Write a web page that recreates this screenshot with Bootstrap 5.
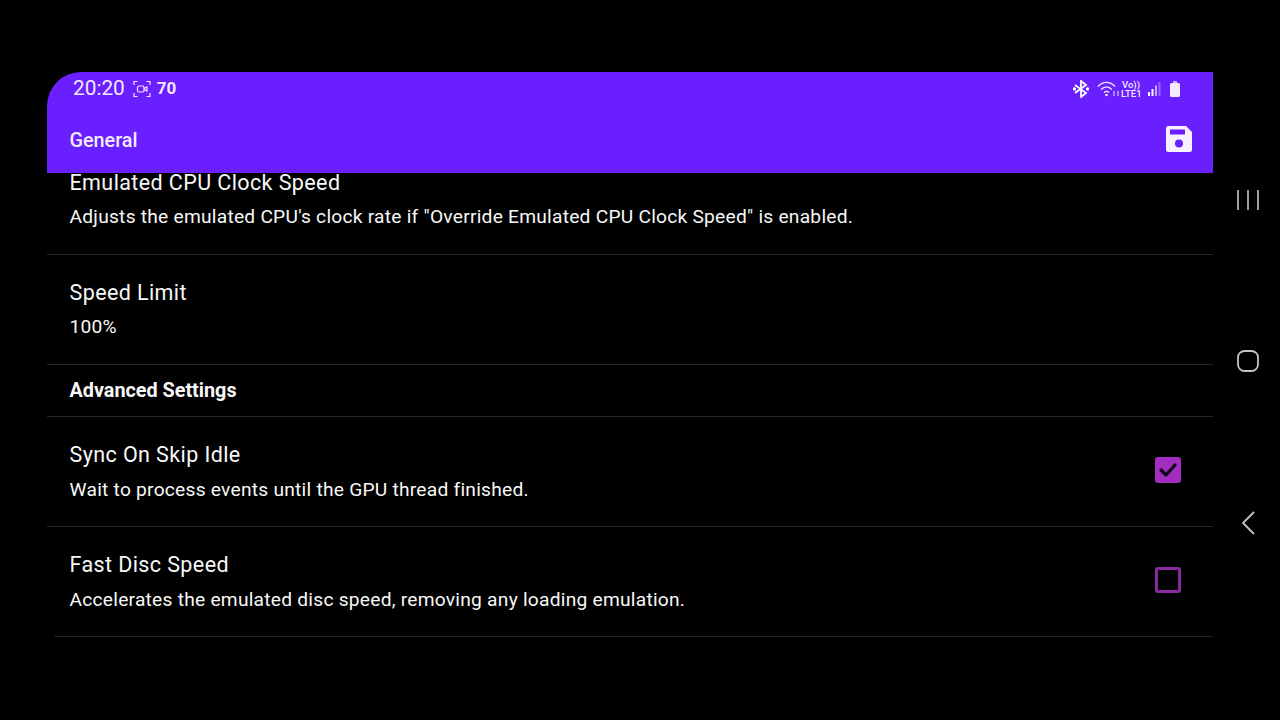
<!DOCTYPE html>
<html lang="en"><head><meta charset="utf-8"><title>General</title>
<link rel="stylesheet" href="https://cdn.jsdelivr.net/npm/bootstrap@5.3.0/dist/css/bootstrap.min.css">
<style>
html,body{height:720px;overflow:hidden;background:#000;}
body{font-family:Roboto,"Liberation Sans",sans-serif;color:#fff;}
.shell{height:720px;padding:72px 0 0 47px;}
.screen{width:1166px;height:648px;}
.appbar{height:101px;background:#6a1fff;border-top-left-radius:34px;}
.statusrow{height:33px;padding:0 32px 0 26px;}
.clock{font-size:20.800px;line-height:33px;color:#f1e8ff;}
.recnum{font-size:17px;font-weight:700;line-height:33px;color:#f1e8ff;margin-left:-2px;}
.toolrow{height:68px;padding:0 21px 0 22.500px;}
.apptitle{font-size:19.800px;font-weight:500;color:#f3ecff;padding-top:4px;}
.entry{height:110px;padding:0 22.500px;border-bottom:1px solid #262626;}
.entry-first{height:82px;}
.entry-last{margin-left:7px;padding-left:15.500px;border-bottom-color:#222;}
.ttl{font-size:21.500px;line-height:26px;color:#f8f8f8;letter-spacing:.4px;}
.desc{font-size:19.200px;line-height:24px;color:#f8f8f8;letter-spacing:.24px;margin-top:9px;}
.twoline{padding-top:1px;}
.twoline .desc{margin-top:10px;}
.first-ttl{margin-top:-3px;}
.secthead{height:52px;padding:0 22.500px;border-bottom:1px solid #262626;font-size:19.800px;font-weight:700;color:#f8f8f8;}
.chk{width:26px;height:26px;border-radius:3px;margin:0 -.5px 4px 0;border:3px solid #8a2ba0;}
.chk-on{background:#a22dbe;border-color:#a22dbe;}
.chkwrap{padding-right:10px;}
.navcol{width:67px;height:648px;padding:117px 0 0 2px;gap:139px;}
</style></head>
<body>
<div class="shell d-flex">
<div class="screen d-flex flex-column overflow-hidden">
 <header class="appbar flex-shrink-0">
  <div class="statusrow d-flex align-items-center justify-content-between">
   <div class="d-flex align-items-center gap-2">
    <span class="clock">20:20</span>
    <svg width="18" height="18" viewBox="0 0 18 18" fill="none" stroke="#f1e8ff" stroke-width="1.200"><path d="M1 5V1.500H4.500M13.500 1.500H17V5M1 13V16.500H4.500M13.500 16.500H17V13"/><rect x="4.500" y="6" width="6.500" height="6" rx="1.500"/><path d="M11 8.500l3-1.500v4l-3-1.500"/></svg>
    <span class="recnum">70</span>
   </div>
   <div class="d-flex align-items-center">
    <svg width="16" height="18" viewBox="0 0 16 18" fill="none" stroke="#fff" stroke-width="1.800"><path d="M2 5l11 8-5 4V1l5 4L2 13"/><circle cx="1.500" cy="9" r=".8" fill="#fff"/><circle cx="14.500" cy="9" r=".8" fill="#fff"/></svg>
    <svg class="ms-2" width="24" height="18" viewBox="0 0 24 18" fill="none" stroke="#f1e8ff" stroke-width="1.400"><path d="M1 6.500C6 1 13 1 18 6.500M4 9.500C7.500 6 11.500 6 15 9.500M7 12.500C8.500 11 10.500 11 12 12.500"/><circle cx="9.500" cy="15" r="1.300" fill="#f1e8ff" stroke="none"/><path d="M17 11v5M21 16v-5" stroke-width="1"/></svg>
    <svg width="22" height="20" viewBox="0 0 22 20"><text x="1" y="8.500" font-family="Roboto" font-size="9.500" font-weight="500" fill="#f1e8ff">Vo))</text><text x="0" y="17.500" font-family="Roboto" font-size="9.500" font-weight="500" fill="#f1e8ff">LTE1</text></svg>
    <svg class="ms-1" width="14" height="16" viewBox="0 0 14 16"><rect x="1" y="11" width="2" height="4" fill="#fff"/><rect x="4.500" y="8" width="2" height="7" fill="#fff"/><rect x="8" y="4.500" width="2" height="10.500" fill="#c9a8ff"/><rect x="11.500" y="1" width="2" height="14" fill="#9a66ff"/></svg>
    <svg class="ms-2" width="12" height="16" viewBox="0 0 12 16"><path d="M4 0h4v2H4z" fill="#c9b3ff"/><path d="M2.500 2h7A1.500 1.500 0 0 1 11 3.500v11A1.500 1.500 0 0 1 9.500 16h-7A1.500 1.500 0 0 1 1 14.500v-11A1.500 1.500 0 0 1 2.500 2z" fill="#f3eaff"/></svg>
   </div>
  </div>
  <div class="toolrow d-flex align-items-center justify-content-between">
   <span class="apptitle">General</span>
   <svg width="26" height="26" viewBox="0 0 26 26"><path fill="#f7f1ff" d="M2.500 0H20l6 6v17.500a2.500 2.500 0 0 1-2.500 2.500h-21A2.500 2.500 0 0 1 0 23.500v-21A2.500 2.500 0 0 1 2.500 0z"/><rect x="4" y="3.500" width="15" height="5" fill="#6a1fff"/><circle cx="13" cy="17.500" r="4" fill="#6a1fff"/></svg>
  </div>
 </header>
 <div class="entry entry-first d-flex flex-column">
  <div class="ttl first-ttl">Emulated CPU Clock Speed</div>
  <div class="desc">Adjusts the emulated CPU's clock rate if "Override Emulated CPU Clock Speed" is enabled.</div>
 </div>
 <div class="entry d-flex flex-column justify-content-center">
  <div class="ttl">Speed Limit</div>
  <div class="desc">100%</div>
 </div>
 <div class="secthead d-flex align-items-center">Advanced Settings</div>
 <div class="entry d-flex align-items-center justify-content-between">
  <div class="twoline"><div class="ttl">Sync On Skip Idle</div><div class="desc">Wait to process events until the GPU thread finished.</div></div>
  <div class="chkwrap"><div class="chk chk-on d-flex align-items-center justify-content-center"><svg width="20" height="16" viewBox="0 0 20 16" fill="none" stroke="#12061a" stroke-width="3.200" stroke-linecap="round" stroke-linejoin="round"><path d="M3 8l5 5 9-10"/></svg></div></div>
 </div>
 <div class="entry entry-last d-flex align-items-center justify-content-between">
  <div class="twoline"><div class="ttl">Fast Disc Speed</div><div class="desc">Accelerates the emulated disc speed, removing any loading emulation.</div></div>
  <div class="chkwrap"><div class="chk"></div></div>
 </div>
</div>
<nav class="navcol d-flex flex-column align-items-center">
 <svg width="24" height="22" viewBox="0 0 24 22" fill="none" stroke="#c4c4c4" stroke-width="1.600"><path d="M2 1v20M12 1v20M22 1v20"/></svg>
 <svg width="24" height="22" viewBox="0 0 24 22" fill="none" stroke="#c4c4c4" stroke-width="1.800"><rect x="2" y="1" width="20" height="20" rx="6.500"/></svg>
 <svg width="24" height="24" viewBox="0 0 24 24" fill="none" stroke="#c4c4c4" stroke-width="1.800"><path d="M18 1L7 12l11 11"/></svg>
</nav>
</div>
</body></html>
